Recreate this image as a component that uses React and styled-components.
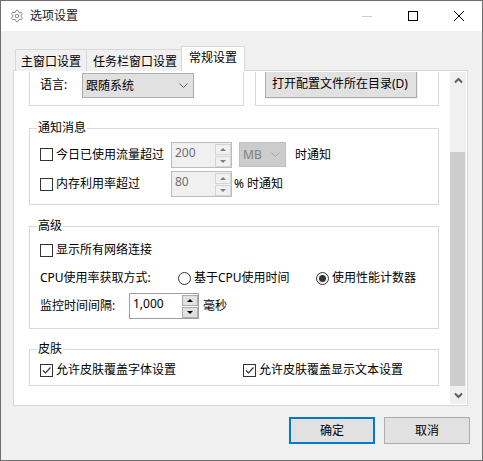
import React from "react";
import styled, { createGlobalStyle } from "styled-components";
import { Settings } from "lucide-react";

const GlobalStyle = createGlobalStyle`
  html, body {
    margin: 0;
    padding: 0;
    background: #f0f0f0;
  }
  body {
    font-family: "Noto Sans", "Noto Sans CJK SC", sans-serif;
    font-size: 12px;
    line-height: 16px;
    color: #000;
  }
`;

const Window = styled.div`
  width: 483px;
  height: 461px;
  box-sizing: border-box;
  border: 1px solid #6e6e6e;
  background: #f0f0f0;
  display: flex;
  flex-direction: column;
  overflow: hidden;
`;

const TitleBar = styled.div`
  height: 30px;
  flex: none;
  background: #fff;
  display: flex;
  align-items: center;
  padding-left: 9px;
  color: #222;
`;

const TitleText = styled.span`
  margin-left: 6px;
  flex: 1;
`;

const WinButton = styled.div`
  width: 46px;
  height: 30px;
  display: flex;
  align-items: center;
  justify-content: center;
`;

const Body = styled.div`
  flex: 1;
  padding: 15px 0 0 12px;
`;

const TabBar = styled.div`
  display: flex;
  align-items: flex-end;
  height: 25px;
  margin-bottom: -1px;
  padding-left: 2px;
  position: relative;
  z-index: 1;
`;

const Tab = styled.div`
  box-sizing: border-box;
  width: ${(p) => p.$w}px;
  height: ${(p) => (p.$active ? 25 : 22)}px;
  padding-left: ${(p) => p.$pad}px;
  line-height: ${(p) => (p.$active ? 22 : 23)}px;
  border: 1px solid #d9d9d9;
  border-bottom: none;
  border-right: ${(p) => (p.$active ? "1px solid #d9d9d9" : "none")};
  background: ${(p) => (p.$active ? "#fff" : "#f0f0f0")};
  white-space: nowrap;
`;

const Pane = styled.div`
  box-sizing: border-box;
  width: 455px;
  height: 336px;
  padding: 1px;
  border: 1px solid #d9d9d9;
  background: #fff;
  display: flex;
`;

const Viewport = styled.div`
  width: 435px;
  height: 332px;
  overflow: hidden;
  flex: none;
`;

const Content = styled.div`
  padding-left: 14px;
  width: 410px;
  margin-top: -21px;
`;

const TopRow = styled.div`
  display: flex;
  gap: 11px;
  margin-bottom: 15px;
`;

const TopGroup = styled.div`
  box-sizing: border-box;
  width: ${(p) => p.$w}px;
  height: 55px;
  border: 1px solid #d9d9d9;
  display: flex;
  align-items: flex-end;
  padding: 0 0 7px ${(p) => p.$pad}px;
`;

const Group = styled.fieldset`
  margin: ${(p) => p.$top}px 0 0;
  min-width: 0;
  padding: ${(p) => p.$pt}px 0 ${(p) => p.$pb}px 10px;
  border: 1px solid #d9d9d9;
`;

const Legend = styled.legend`
  margin-left: -3px;
  height: 14px;
  line-height: 14px;
  padding: 0 1px 0 1px;
  white-space: nowrap;
`;

const Row = styled.div`
  display: flex;
  align-items: center;
  height: ${(p) => p.$h}px;
  margin-top: ${(p) => p.$mt || 0}px;
`;

const Label = styled.span`
  white-space: nowrap;
  width: ${(p) => (p.$w ? `${p.$w}px` : "auto")};
  flex: none;
  margin-left: ${(p) => p.$ml || 0}px;
`;

const ComboLabel = styled(Label)`
  line-height: 27px;
`;

const Box = styled.span`
  box-sizing: border-box;
  width: 13px;
  height: 13px;
  flex: none;
  border: 1px solid #333;
  background: #fff;
  margin-right: 3px;
  display: flex;
  align-items: center;
  justify-content: center;
`;

const CheckOption = styled.div`
  display: flex;
  align-items: center;
  width: ${(p) => (p.$w ? `${p.$w}px` : "auto")};
  flex: none;
  white-space: nowrap;
`;

const Circle = styled.span`
  box-sizing: border-box;
  width: 13px;
  height: 13px;
  flex: none;
  border: 1px solid #333;
  border-radius: 50%;
  margin-right: 3px;
  display: flex;
  align-items: center;
  justify-content: center;
  &::after {
    content: "";
    display: ${(p) => (p.$on ? "block" : "none")};
    width: 7px;
    height: 7px;
    border-radius: 50%;
    background: #333;
  }
`;

const RadioOption = styled.div`
  display: flex;
  align-items: center;
  white-space: nowrap;
  width: ${(p) => (p.$w ? `${p.$w}px` : "auto")};
  margin-left: ${(p) => p.$ml || 0}px;
  flex: none;
`;

const SpinBox = styled.div`
  box-sizing: border-box;
  width: ${(p) => p.$w}px;
  height: 26px;
  flex: none;
  display: flex;
  border: 1px solid ${(p) => (p.$off ? "#bcbcbc" : "#a0a0a0")};
  background: ${(p) => (p.$off ? "#f0f0f0" : "#fff")};
  color: ${(p) => (p.$off ? "#6d6d6d" : "#000")};
`;

const SpinValue = styled.span`
  flex: 1;
  padding: 2px 0 0 3px;
  line-height: 16px;
`;

const SpinButtons = styled.div`
  width: 16px;
  padding: 1px 0 0;
  display: flex;
  flex-direction: column;
  gap: 1px;
`;

const SpinButton = styled.div`
  box-sizing: border-box;
  height: 11px;
  border: 1px solid ${(p) => (p.$off ? "#d4d4d4" : "#adadad")};
  background: ${(p) => (p.$off ? "#f0f0f0" : "#e1e1e1")};
  display: flex;
  align-items: center;
  justify-content: center;
  &::after {
    content: "";
    width: 0;
    height: 0;
    border-left: 3px solid transparent;
    border-right: 3px solid transparent;
    border-${(p) => (p.$down ? "top" : "bottom")}: 3px solid ${(p) => (p.$off ? "#808080" : "#000")};
  }
`;

const Combo = styled.div`
  box-sizing: border-box;
  width: ${(p) => p.$w}px;
  height: 25px;
  flex: none;
  margin-left: ${(p) => p.$ml || 0}px;
  padding: 0 5px 0 3px;
  display: flex;
  align-items: center;
  justify-content: space-between;
  border: 1px solid ${(p) => (p.$off ? "#bfbfbf" : "#adadad")};
  background: ${(p) => (p.$off ? "#cccccc" : "#e1e1e1")};
  color: ${(p) => (p.$off ? "#808080" : "#000")};
`;

const PushButton = styled.div`
  box-sizing: border-box;
  width: 152px;
  height: 27px;
  border: 1px solid #adadad;
  background: #e1e1e1;
  box-shadow: 1px 1px 0 #f0f0f0;
  padding-left: 6px;
  line-height: 24px;
  white-space: nowrap;
`;

const ScrollBar = styled.div`
  width: 16px;
  height: 332px;
  flex: none;
  background: #f0f0f0;
  display: flex;
  flex-direction: column;
`;

const ScrollArrow = styled.div`
  height: ${(p) => p.$h}px;
  flex: none;
  display: flex;
  align-items: center;
  justify-content: center;
`;

const ScrollThumb = styled.div`
  flex: 1;
  background: #cdcdcd;
  margin-right: 1px;
`;

const ScrollTrack = styled.div`
  height: 63px;
  flex: none;
`;

const Footer = styled.div`
  display: flex;
  justify-content: flex-end;
  gap: 9px;
  margin-top: 11px;
  padding-right: 12px;
`;

const DialogButton = styled.div`
  box-sizing: border-box;
  width: 86px;
  height: 27px;
  border: ${(p) => (p.$primary ? "2px solid #0078d7" : "1px solid #adadad")};
  background: #e1e1e1;
  display: flex;
  align-items: center;
  justify-content: center;
`;

const Chevron = ({ color = "#606060", w = 9 }) => (
  <svg width={w} height="5" viewBox="0 0 9 5" fill="none" stroke={color} strokeWidth="1">
    <path d="M0.5 0.5 L4.5 4.5 L8.5 0.5" />
  </svg>
);

const Check = ({ on, children, w }) => (
  <CheckOption $w={w}>
    <Box>
      {on && (
        <svg width="11" height="11" viewBox="0 0 11 11" fill="none" stroke="#333" strokeWidth="1.2">
          <path d="M2 5.5 L4.5 8 L9.5 2.5" />
        </svg>
      )}
    </Box>
    {children}
  </CheckOption>
);

const Spin = ({ value, w, off }) => (
  <SpinBox $w={w} $off={off}>
    <SpinValue>{value}</SpinValue>
    <SpinButtons>
      <SpinButton $off={off} />
      <SpinButton $off={off} $down />
    </SpinButtons>
  </SpinBox>
);

const ScrollChevron = ({ up }) => (
  <svg width="9" height="7" viewBox="0 0 9 7" fill="none" stroke="#606060" strokeWidth="2">
    <path d={up ? "M1 5.5 L4.5 2 L8 5.5" : "M1 1.5 L4.5 5 L8 1.5"} />
  </svg>
);

export default function App() {
  return (
    <>
      <GlobalStyle />
      <Window>
        <TitleBar>
          <Settings size={14} color="#7a7a7a" strokeWidth={1.5} />
          <TitleText>选项设置</TitleText>
          <WinButton>
            <svg width="10" height="1"><rect width="10" height="1" fill="#cccccc" /></svg>
          </WinButton>
          <WinButton>
            <svg width="10" height="10" fill="none" stroke="#000">
              <rect x="0.5" y="0.5" width="9" height="9" />
            </svg>
          </WinButton>
          <WinButton>
            <svg width="10" height="10" fill="none" stroke="#000" strokeWidth="1">
              <path d="M0 0 L10 10 M10 0 L0 10" />
            </svg>
          </WinButton>
        </TitleBar>
        <Body>
          <TabBar>
            <Tab $w={71} $pad={5}>主窗口设置</Tab>
            <Tab $w={95} $pad={6}>任务栏窗口设置</Tab>
            <Tab $w={64} $pad={7} $active>常规设置</Tab>
          </TabBar>
          <Pane>
            <Viewport>
              <Content>
                <TopRow>
                  <TopGroup $w={215} $pad={10}>
                    <ComboLabel $w={42}>语言:</ComboLabel>
                    <Combo $w={112}>
                      跟随系统
                      <Chevron />
                    </Combo>
                  </TopGroup>
                  <TopGroup $w={184} $pad={9}>
                    <PushButton>打开配置文件所在目录(D)</PushButton>
                  </TopGroup>
                </TopRow>

                <Group $top={0} $pt={6} $pb={7}>
                  <Legend>通知消息</Legend>
                  <Row $h={27}>
                    <Check w={131}>今日已使用流量超过</Check>
                    <Spin value="200" w={61} off />
                    <Combo $w={47} $ml={7} $off>
                      MB
                      <Chevron color="#a6a6a6" />
                    </Combo>
                    <Label $ml={9}>时通知</Label>
                  </Row>
                  <Row $h={26} $mt={3}>
                    <Check w={131}>内存利用率超过</Check>
                    <Spin value="80" w={61} off />
                    <Label $ml={2}>% 时通知</Label>
                  </Row>
                </Group>

                <Group $top={14} $pt={7} $pb={9}>
                  <Legend>高级</Legend>
                  <Row $h={20}>
                    <Check>显示所有网络连接</Check>
                  </Row>
                  <Row $h={20} $mt={8}>
                    <Label $w={138}>CPU使用率获取方式:</Label>
                    <RadioOption $w={138}>
                      <Circle />
                      基于CPU使用时间
                    </RadioOption>
                    <RadioOption>
                      <Circle $on />
                      使用性能计数器
                    </RadioOption>
                  </Row>
                  <Row $h={26} $mt={5}>
                    <Label $w={89}>监控时间间隔:</Label>
                    <Spin value="1,000" w={70} />
                    <Label $ml={4}>毫秒</Label>
                  </Row>
                </Group>

                <Group $top={13} $pt={6} $pb={7}>
                  <Legend>皮肤</Legend>
                  <Row $h={16}>
                    <Check on w={203}>允许皮肤覆盖字体设置</Check>
                    <Check on>允许皮肤覆盖显示文本设置</Check>
                  </Row>
                </Group>
              </Content>
            </Viewport>
            <ScrollBar>
              <ScrollArrow $h={17}><ScrollChevron up /></ScrollArrow>
              <ScrollTrack />
              <ScrollThumb />
              <ScrollArrow $h={18}><ScrollChevron /></ScrollArrow>
            </ScrollBar>
          </Pane>
          <Footer>
            <DialogButton $primary>确定</DialogButton>
            <DialogButton>取消</DialogButton>
          </Footer>
        </Body>
      </Window>
    </>
  );
}
